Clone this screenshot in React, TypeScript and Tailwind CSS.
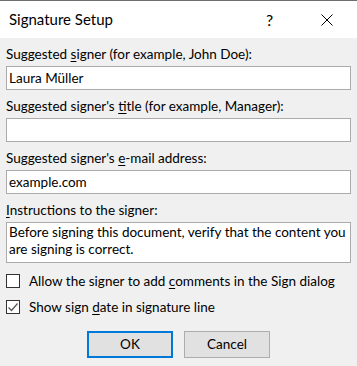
import React from "react";

const font = { fontFamily: 'Lato, "Noto Sans", sans-serif' };

function U({ children }: { children: React.ReactNode }) {
  return <span className="underline underline-offset-2 decoration-1">{children}</span>;
}

function Field({ value }: { value?: string }) {
  return (
    <div className="mt-[4px] h-[24px] border border-[#ababab] bg-white flex items-center px-[2px] text-[13.5px] leading-[16px] text-black">
      {value}
    </div>
  );
}

function Label({ children }: { children: React.ReactNode }) {
  return <div className="mt-[8px] h-[16px] text-[13.5px] leading-[16px] text-black whitespace-nowrap">{children}</div>;
}

function CheckBox({ checked }: { checked?: boolean }) {
  return (
    <div className="w-[14px] h-[14px] border border-[#333333] bg-white flex items-center justify-center shrink-0">
      {checked && (
        <svg width="12" height="12" viewBox="0 0 12 12">
          <path d="M1.5 6.5 L4.5 9.5 L10.5 2.5" fill="none" stroke="#555555" strokeWidth="1.2" />
        </svg>
      )}
    </div>
  );
}

export default function App() {
  return (
    <div className="w-[357px] h-[366px] bg-[#f0f0f0] border-t border-[#6e6e6e] overflow-hidden" style={font}>
      {/* Title bar */}
      <div className="h-[37px] bg-white flex items-center">
        <div className="pl-[9px] text-[15px] text-black flex-1">Signature Setup</div>
        <div className="w-[55px] text-[16px] text-black">?</div>
        <div className="w-[36px] flex items-center">
          <svg width="12" height="12" viewBox="0 0 12 12">
            <path d="M0.5 0.5 L11.5 11.5 M11.5 0.5 L0.5 11.5" stroke="#000000" strokeWidth="1" />
          </svg>
        </div>
      </div>

      {/* Body */}
      <div className="pl-[6px] pr-[6px]">
        <Label>
          Suggested <U>s</U>igner (for example, John Doe):
        </Label>
        <Field value="Laura Müller" />

        <Label>
          Suggested signer's <U>t</U>itle (for example, Manager):
        </Label>
        <Field />

        <Label>
          Suggested signer's <U>e</U>-mail address:
        </Label>
        <Field value="example.com" />

        <Label>
          <U>I</U>nstructions to the signer:
        </Label>
        <div className="mt-[4px] h-[41px] border border-[#ababab] bg-white px-[2px] pt-[1px] text-[13.5px] leading-[17px] text-black whitespace-nowrap overflow-hidden">
          Before signing this document, verify that the content you
          <br />
          are signing is correct.
        </div>

        <div className="mt-[10px] flex items-center gap-[9px] text-[13.5px] leading-[16px] text-black">
          <CheckBox />
          <span>
            Allow the signer to add <U>c</U>omments in the Sign dialog
          </span>
        </div>
        <div className="mt-[10px] flex items-center gap-[9px] text-[13.5px] leading-[16px] text-black">
          <CheckBox checked />
          <span>
            Show sign <U>d</U>ate in signature line
          </span>
        </div>

        <div className="mt-[16px] flex pl-[81px] gap-[11px]">
          <button className="w-[86px] h-[27px] bg-[#e1e1e1] border-2 border-[#0078d7] text-[13.5px] text-black">OK</button>
          <button className="w-[86px] h-[27px] bg-[#e1e1e1] border border-[#adadad] text-[13.5px] text-black">Cancel</button>
        </div>
      </div>
    </div>
  );
}
